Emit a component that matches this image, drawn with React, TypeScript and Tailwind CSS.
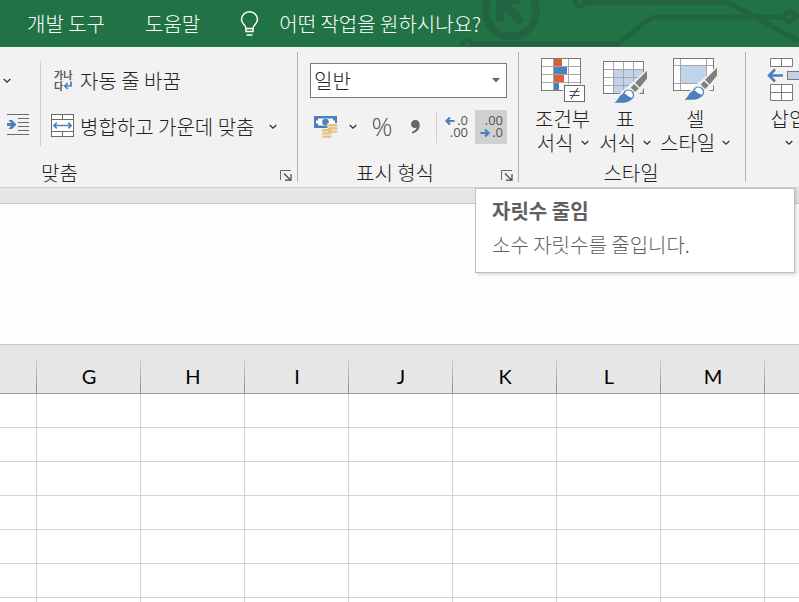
import type { ReactNode } from "react";

const COLUMNS = ["G", "H", "I", "J", "K", "L", "M"];
const ROWS = [1, 2, 3, 4, 5, 6, 7];

function Chevron() {
  return (
    <svg className="shrink-0" width="8" height="6" viewBox="0 0 8 6" fill="none" stroke="#333333" strokeWidth="1.3">
      <path d="M0.7 1 L4 4.2 L7.3 1" />
    </svg>
  );
}

function BannerArt() {
  return (
    <svg
      className="pointer-events-none absolute right-0 top-0"
      width="344"
      height="47"
      viewBox="455 0 344 47"
      fill="none"
      stroke="#226441"
      aria-hidden="true"
    >
      <circle cx="511" cy="11" r="25.5" strokeWidth="7.5" />
      <path d="M496 0 H521 V4 H511 L524 19.5 L518.5 25 L504 11 V22 H496 Z" fill="#226441" stroke="none" />
      <path d="M462.3 46 V45 A5 5 0 0 1 472.3 45 V46" strokeWidth="4.5" />
      <path d="M472 44 H615 Q618 44 621 41.5 L648 20 Q652 17 656 17 H783 M795 17 H799" strokeWidth="5" />
      <circle cx="789.5" cy="16.5" r="5" strokeWidth="4.5" />
      <circle cx="580" cy="1.5" r="5" strokeWidth="4.5" />
      <path d="M585 2.3 H724 Q728 2.3 732 4.5 L799 41" strokeWidth="5" />
    </svg>
  );
}

function BulbIcon() {
  return (
    <svg width="19" height="26" viewBox="0 0 19 26" fill="none" stroke="#ffffff" strokeWidth="1.5">
      <path d="M6 17.5 C6 14 1.5 13 1.5 8.6 A8 7.8 0 0 1 17.5 8.6 C17.5 13 13 14 13 17.5 Z" />
      <path d="M6 17.5 V20.5 H13 V17.5 M6.5 24 H12.5" />
    </svg>
  );
}

function IndentIcon() {
  return (
    <svg width="22" height="22" viewBox="0 0 22 22" shapeRendering="crispEdges">
      <g fill="#6a6a6a">
        <path d="M0 0 H22 V1 H0 Z M11 4 H22 V5 H11 Z M11 8 H22 V9 H11 Z M11 12 H22 V13 H11 Z M11 16 H22 V17 H11 Z M0 20 H22 V21 H0 Z" />
      </g>
      <path
        d="M0 9 H4 L1.5 6 H5 L9.5 10.5 L5 15 H1.5 L4 12 H0 Z"
        fill="#4a80bb"
        shapeRendering="auto"
      />
    </svg>
  );
}

function WrapIcon() {
  return (
    <svg className="overflow-visible" width="19" height="22" viewBox="0 0 19 22">
      <g fill="#555555" className="text-[10px] font-bold">
        <text x="0" y="9">가나</text>
        <text x="0" y="20">다</text>
      </g>
      <path d="M17 11.5 V16 H11 M13.8 13 L10.8 16 L13.8 19" fill="none" stroke="#4a80bb" strokeWidth="1.7" />
    </svg>
  );
}

function MergeIcon() {
  return (
    <svg width="23" height="23" viewBox="0 0 23 23" fill="none">
      <rect x="0.5" y="0.5" width="22" height="22" fill="#ffffff" stroke="#6a6a6a" />
      <path d="M0 5.5 H23 M0 17.5 H23 M11.5 0 V5.5 M11.5 17.5 V23" stroke="#6a6a6a" />
      <path d="M3 11.5 H20 M5.8 8.6 L2.8 11.5 L5.8 14.4 M17.2 8.6 L20.2 11.5 L17.2 14.4" stroke="#4a80bb" strokeWidth="1.5" />
    </svg>
  );
}

function CurrencyIcon() {
  return (
    <svg width="24" height="23" viewBox="0 0 24 23">
      <rect width="23" height="12" fill="#4a80bb" />
      <path d="M4 2.5 H19 V4.5 H21 V7.5 H19 V9.5 H4 V7.5 H2 V4.5 H4 Z" fill="#ffffff" />
      <circle cx="11.5" cy="6" r="3.3" fill="#4a80bb" />
      <path d="M13.5 7 H24 V18 H18 V23 H7.5 V12.5 H13.5 Z" fill="#f2f2f2" />
      <g fill="#ebc084">
        <rect x="14" y="8" width="9.5" height="2.4" rx="1.2" />
        <rect x="14" y="11.2" width="9.5" height="2.4" rx="1.2" />
        <rect x="14" y="14.4" width="9.5" height="2.4" rx="1.2" />
        <rect x="8" y="13" width="9.5" height="2.4" rx="1.2" />
        <rect x="8" y="16.2" width="9.5" height="2.4" rx="1.2" />
        <rect x="8" y="19.4" width="9.5" height="2.4" rx="1.2" />
      </g>
    </svg>
  );
}

function CommaIcon() {
  return (
    <svg width="9" height="14" viewBox="0 0 9 14">
      <path d="M4.3 0 C7 0 8.7 1.9 8.7 5 C8.7 9.6 5.8 12.6 1 13.4 V11.8 C3.8 10.9 5.2 9.6 5.5 7.8 C2.4 8.6 0 6.9 0 4.2 C0 1.8 1.8 0 4.3 0 Z" fill="#666666" />
    </svg>
  );
}

function IncreaseDecimalIcon() {
  return (
    <svg className="overflow-visible" width="23" height="26" viewBox="0 0 23 26">
      <g fill="#555555" textAnchor="end" className="font-['Open_Sans',sans-serif] text-[13px] font-normal">
        <text x="23" y="11">.0</text>
        <text x="23" y="23">.00</text>
      </g>
      <path d="M9.5 7 H1.5 M5 3.5 L1.5 7 L5 10.5" fill="none" stroke="#4a80bb" strokeWidth="2.2" />
    </svg>
  );
}

function DecreaseDecimalIcon() {
  return (
    <svg className="overflow-visible" width="23" height="26" viewBox="0 0 23 26">
      <g fill="#555555" textAnchor="end" className="font-['Open_Sans',sans-serif] text-[13px] font-normal">
        <text x="23" y="11">.00</text>
        <text x="23" y="23">.0</text>
      </g>
      <path d="M0.5 19 H8.5 M5 15.5 L8.5 19 L5 22.5" fill="none" stroke="#4a80bb" strokeWidth="2.2" />
    </svg>
  );
}

function LauncherIcon() {
  return (
    <svg width="12" height="11" viewBox="0 0 12 11" fill="none">
      <path d="M0.5 10 V0.5 H11" stroke="#666666" />
      <path d="M4 3.5 L10 9.5 M11 4 V10.2 H5" stroke="#444444" strokeWidth="1.2" />
    </svg>
  );
}

function ConditionalIcon() {
  return (
    <svg width="44" height="46" viewBox="0 0 44 46" fill="none">
      <rect x="0.5" y="0.5" width="39" height="32" fill="#ffffff" />
      <path d="M12.5 0 V33 M27.5 0 V33 M0 8.5 H40 M0 16.5 H40 M0 24.5 H40" stroke="#a6a6a6" />
      <path d="M13 1 H21 V8 H13 Z M13 17 H23 V24 H13 Z" fill="#d95f3f" />
      <path d="M13 9 H26 V16 H13 Z M13 25 H18 V32 H13 Z" fill="#4a80bb" />
      <rect x="0.5" y="0.5" width="39" height="32" stroke="#7a7a7a" />
      <rect x="22" y="26" width="22" height="20" fill="#f2f2f2" />
      <rect x="23.5" y="27.5" width="20" height="16" fill="#ffffff" stroke="#6a6a6a" />
      <path d="M28.5 33.5 H38.5 M28.5 37.5 H38.5 M37 30 L30 41" stroke="#444444" strokeWidth="1.1" />
    </svg>
  );
}

function Brush() {
  return (
    <g>
      <path d="M45 10 L30 24 L19 33 L9 46 H24 L33 40 L45 25 Z" fill="#f2f2f2" />
      <path d="M44 12.8 V20.5 L36.7 29.5 L32 24.7 Z" fill="#808080" />
      <path d="M31 26 L35.8 30.5 L32 34 L27.7 29.4 Z" fill="#808080" />
      <circle cx="25.5" cy="37" r="5" fill="#ffffff" stroke="#4a80bb" strokeWidth="1.2" />
      <path d="M11.5 44.7 C16 42 15.5 37 20.5 35.5 C24 35.5 23.5 38.5 28.5 39.5 C28.5 42.5 25 44.7 21 44.7 Z" fill="#4a80bb" />
    </g>
  );
}

function TableFormatIcon() {
  return (
    <svg width="44" height="46" viewBox="0 0 44 46" fill="none">
      <rect x="0.5" y="3.5" width="40" height="32" fill="#ffffff" />
      <rect x="10.5" y="11.5" width="30" height="24" fill="#c0d3e9" />
      <path d="M10.5 3 V36 M20.5 3 V36 M30.5 3 V36 M0 11.5 H41 M0 19.5 H41 M0 27.5 H41" stroke="#a6a6a6" />
      <rect x="0.5" y="3.5" width="40" height="32" stroke="#7a7a7a" />
      <Brush />
    </svg>
  );
}

function CellStyleIcon() {
  return (
    <svg width="44" height="46" viewBox="0 0 44 46" fill="none">
      <rect x="0.5" y="0.5" width="40" height="32" fill="#ffffff" />
      <rect x="7.5" y="7.5" width="26" height="18" fill="#c0d3e9" />
      <path d="M7.5 0 V33 M33.5 0 V33 M0 7.5 H41 M0 25.5 H41" stroke="#a6a6a6" />
      <rect x="0.5" y="0.5" width="40" height="32" stroke="#7a7a7a" />
      <g transform="translate(0 -3)">
        <Brush />
      </g>
    </svg>
  );
}

function InsertIcon() {
  return (
    <svg width="44" height="46" viewBox="0 0 44 46" fill="none">
      <path d="M3.5 0.5 H25.5 V8.5 H3.5 Z M14.5 0.5 V8.5" fill="#ffffff" stroke="#7a7a7a" />
      <path d="M3.5 26.5 H25.5 V42.5 H3.5 Z M14.5 26.5 V42.5 M3.5 34.5 H25.5" fill="#ffffff" stroke="#7a7a7a" />
      <path d="M16 17.5 H2 M8 11.5 L2 17.5 L8 23.5" stroke="#4a80bb" strokeWidth="2.6" />
      <rect x="20.5" y="13.5" width="22" height="8" fill="#c0d3e9" stroke="#7a7a7a" />
    </svg>
  );
}

function Group({ label, className, footer, launcher, children }: {
  label: string;
  className: string;
  footer: string;
  launcher?: boolean;
  children: ReactNode;
}) {
  return (
    <section aria-label={label} className={`flex flex-col ${className}`}>
      <div className="flex flex-1">{children}</div>
      <div className={`flex h-[18px] items-center ${footer}`}>
        <span className="whitespace-nowrap">{label}</span>
        {launcher && (
          <button type="button" aria-label={`${label} 설정`} className="ml-auto mr-[5px] pt-1">
            <LauncherIcon />
          </button>
        )}
      </div>
    </section>
  );
}

function BigButton({ icon, top, bottom }: { icon: ReactNode; top: string; bottom?: string }) {
  return (
    <button type="button" className="flex flex-col items-center whitespace-nowrap leading-6">
      {icon}
      <span className="mt-[3px]">{top}</span>
      <span className="flex h-6 items-center gap-[7px]">
        {bottom}
        <Chevron />
      </span>
    </button>
  );
}

export default function App() {
  return (
    <div className="flex h-screen flex-col overflow-hidden bg-white font-['Noto_Sans_CJK_KR',sans-serif] text-[20px] font-light leading-6 text-[#222222]">
      <header className="relative flex h-[47px] shrink-0 items-center gap-10 bg-[#217346] pl-[27px] text-white">
        <BannerArt />
        <button type="button" className="shrink-0">개발 도구</button>
        <button type="button" className="shrink-0">도움말</button>
        <label className="relative flex items-center gap-5">
          <BulbIcon />
          <input
            type="text"
            aria-label="어떤 작업을 원하시나요?"
            placeholder="어떤 작업을 원하시나요?"
            className="w-52 bg-transparent outline-none placeholder:text-white placeholder:opacity-100"
          />
        </label>
      </header>

      <div className="relative z-10 flex h-[141px] shrink-0 border-b border-[#d0d0d0] bg-[#f2f2f2] py-[5px]">
        <Group label="맞춤" launcher className="w-[298px] shrink-0 border-r border-[#b1b1b1]" footer="pl-[41px]">
          <div className="mt-[9px] flex h-[85px] w-[41px] flex-col gap-[10px] border-r border-[#d0d0d0] pt-[2px]">
            <button type="button" aria-label="방향" className="flex h-9 items-center pl-[3px]">
              <Chevron />
            </button>
            <button type="button" aria-label="들여쓰기" className="flex h-9 items-center pb-1 pl-[7px]">
              <IndentIcon />
            </button>
          </div>
          <div className="flex flex-col items-start gap-[10px] pl-[10px] pt-[11px]">
            <button type="button" className="flex h-9 items-center">
              <span className="flex w-[29px] justify-start pl-[3px]">
                <WrapIcon />
              </span>
              자동 줄 바꿈
            </button>
            <button type="button" className="flex h-9 items-center">
              <span className="flex w-[29px] justify-start pb-[3px]">
                <MergeIcon />
              </span>
              병합하고 가운데 맞춤
              <span className="pl-[15px]">
                <Chevron />
              </span>
            </button>
          </div>
        </Group>

        <Group label="표시 형식" launcher className="w-[221px] shrink-0 border-r border-[#b1b1b1]" footer="pl-[58px]">
          <div className="flex flex-1 flex-col gap-3 pl-3 pr-[11px] pt-[11px]">
            <div className="relative h-[35px]">
              <select
                aria-label="표시 형식"
                className="h-full w-full appearance-none rounded-none border border-[#7a7a7a] bg-white pl-[3px] outline-none"
              >
                <option>일반</option>
              </select>
              <svg className="pointer-events-none absolute right-[7px] top-[15px]" width="8" height="5" viewBox="0 0 8 5">
                <path d="M0 0 H8 L4 4.5 Z" fill="#666666" />
              </svg>
            </div>
            <div className="flex h-[34px] items-center">
              <button type="button" aria-label="회계 표시 형식" className="flex w-[60px] items-center gap-[11px] pl-1">
                <CurrencyIcon />
                <Chevron />
              </button>
              <button type="button" className="w-6 pb-[3px] font-['Open_Sans',sans-serif] text-[26px] font-light text-[#555555]">
                %
              </button>
              <button type="button" aria-label="쉼표 스타일" className="flex w-[42px] justify-center">
                <CommaIcon />
              </button>
              <span className="h-8 w-px bg-[#d0d0d0]" />
              <button type="button" aria-label="자릿수 늘림" className="flex h-full w-[38px] items-center justify-center">
                <IncreaseDecimalIcon />
              </button>
              <div className="relative h-full w-8 shrink-0">
                <button
                  type="button"
                  aria-label="자릿수 줄임"
                  className="flex h-full w-full items-center justify-center bg-[#d0d0d0]"
                >
                  <DecreaseDecimalIcon />
                </button>
                <div
                  role="tooltip"
                  className="absolute left-0 top-[78px] flex h-[85px] w-80 flex-col gap-[10px] border border-[#bebebe] bg-white px-4 pt-[10px] text-[#606060] shadow-[2px_2px_3px_rgba(0,0,0,0.14)]"
                >
                  <strong className="font-bold">자릿수 줄임</strong>
                  <span>소수 자릿수를 줄입니다.</span>
                </div>
              </div>
            </div>
          </div>
        </Group>

        <Group label="스타일" className="w-[227px] shrink-0 border-r border-[#b1b1b1]" footer="justify-center pr-[2px]">
          <div className="flex items-start gap-[9px] pl-4 pt-[6px]">
            <BigButton icon={<ConditionalIcon />} top="조건부" bottom="서식" />
            <BigButton icon={<TableFormatIcon />} top="표" bottom="서식" />
            <BigButton icon={<CellStyleIcon />} top="셀" bottom="스타일" />
          </div>
        </Group>

        <div className="flex flex-1 items-start overflow-hidden pl-[21px] pt-[6px]">
          <BigButton icon={<InsertIcon />} top="삽입" />
        </div>
      </div>

      <div className="h-4 shrink-0 border-b border-[#c6c6c6] bg-[#e6e6e6]" />
      <div className="h-[141px] shrink-0 border-b border-[#c6c6c6] bg-[#fdfdfd]" />

      <table className="w-full table-fixed border-separate border-spacing-0">
        <colgroup>
          <col className="w-[37px]" />
          {COLUMNS.map((name) => (
            <col key={name} className="w-[104px]" />
          ))}
          <col />
        </colgroup>
        <thead>
          <tr className="h-[49px] bg-[#e6e6e6] font-['Lato',sans-serif] text-black">
            {["", ...COLUMNS].map((name) => (
              <th
                key={name}
                scope="col"
                className="border-b border-[#999999] bg-[linear-gradient(#d0d0d0,#8a8a8a)] bg-[length:1px_33px] bg-right-bottom bg-no-repeat p-0 pt-[14px] font-normal"
              >
                {name}
              </th>
            ))}
            <th className="border-b border-[#999999] p-0" />
          </tr>
        </thead>
        <tbody>
          {ROWS.map((row) => (
            <tr key={row} className="h-[34px]">
              {["", ...COLUMNS].map((name) => (
                <td key={name} className="border-b border-r border-[#d4d4d4] p-0" />
              ))}
              <td className="border-b border-[#d4d4d4] p-0" />
            </tr>
          ))}
        </tbody>
      </table>
    </div>
  );
}
